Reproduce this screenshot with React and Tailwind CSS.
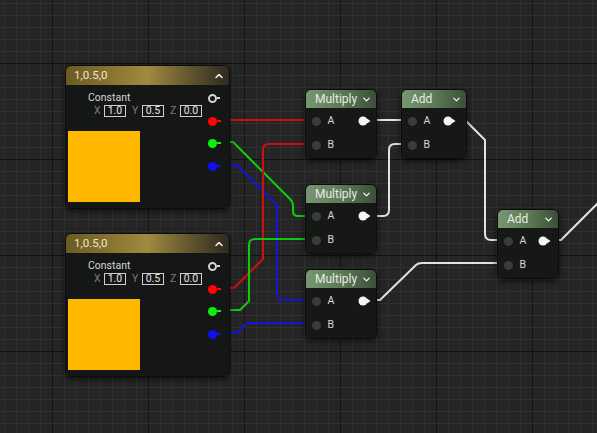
import { ChevronUp, ChevronDown } from "lucide-react";

const font = { fontFamily: "Roboto, 'Liberation Sans', sans-serif" };

function Grid() {
	const v = [];
	const h = [];
	for (let x = 4; x < 600; x += 12) v.push(x);
	for (let y = 3; y < 440; y += 12) h.push(y);
	return (
		<svg className="absolute inset-0" width="597" height="433">
			{v.map((x) => (
				<line key={"v" + x} x1={x + 0.5} y1="0" x2={x + 0.5} y2="433" stroke={(x - 52) % 96 === 0 ? "#121212" : "#303030"} strokeWidth="1" />
			))}
			{h.map((y) => (
				<line key={"h" + y} x1="0" y1={y + 0.5} x2="597" y2={y + 0.5} stroke={(y - 63) % 96 === 0 ? "#121212" : "#303030"} strokeWidth="1" />
			))}
		</svg>
	);
}

function Wires() {
	const red = "#d01010";
	const green = "#12c812";
	const blue = "#1414dc";
	const white = "#e2e2e2";
	return (
		<svg className="absolute inset-0" width="597" height="433" fill="none" strokeWidth="2" strokeLinejoin="round">
			<path d="M221 120 H316" stroke={red} />
			<path d="M221 142 H233 L290 199 Q293 202 293 206 V211 Q293 216 298 216 H316" stroke={green} />
			<path d="M221 165 H237 L277 205 V294 Q277 300 283 300 H316" stroke={blue} />
			<path d="M221 288 H234 L263 259 V150 Q263 144 269 144 H316" stroke={red} />
			<path d="M221 310 H240 L249 301 V245 Q249 239 255 239 H316" stroke={green} />
			<path d="M221 333 H237 L247 323 H316" stroke={blue} />
			<path d="M363 120 H411" stroke={white} />
			<path d="M363 216 H383 Q389 216 389 210 V150 Q389 144 395 144 H411" stroke={white} />
			<path d="M363 300 H380 L416 265 Q418 263 422 263 H507" stroke={white} />
			<path d="M448 120 H465 L485 140 V234 Q485 240 491 240 H507" stroke={white} />
			<path d="M543 240 H561 L600 201" stroke={white} />
		</svg>
	);
}

function ColorPin({ color }) {
	return (
		<div className="flex items-center h-[9px]">
			<div className={`w-[9px] h-[9px] rounded-full ${color}`}></div>
			<div className={`w-[4px] h-[2px] ${color}`}></div>
		</div>
	);
}

function ValueBox({ label, value }) {
	return (
		<div className="flex items-center">
			<span className="text-[10.5px] text-[#7c7c7c] w-[7px] leading-none">{label}</span>
			<span className="ml-[3px] w-[22px] h-[12px] border border-[#cfcfcf] text-[10.5px] leading-[10px] text-[#e6e6e6] flex items-center justify-center">{value}</span>
		</div>
	);
}

function ConstNode({ pos }) {
	return (
		<div className={`absolute left-[65px] w-[165px] rounded-[6px] border border-[#0c0c0c] shadow-[0_2px_6px_rgba(0,0,0,0.6)] overflow-hidden ${pos}`}>
			<div className="h-[19px] flex items-center justify-between pl-[8px] pr-[4px] bg-linear-to-r from-[#6b5a22] via-[#a08a3e] to-[#2f2a1e]">
				<span className="text-[11.5px] text-[#ece6d0]">1,0.5,0</span>
				<ChevronUp size={12} strokeWidth={3} color="#f2f2f2" />
			</div>
			<div className="h-[123px] bg-[#151716] flex pl-[2px]">
				<div className="flex-1 flex flex-col pt-[6px]">
					<div className="h-[14px] pl-[20px] text-[10.5px] leading-[14px] text-[#d6d6d6]">Constant</div>
					<div className="h-[12px] pl-[26px] flex items-center gap-[6px]">
						<ValueBox label="X" value="1.0" />
						<ValueBox label="Y" value="0.5" />
						<ValueBox label="Z" value="0.0" />
					</div>
					<div className="mt-[14px] w-[72px] h-[71px] bg-[#ffb800]"></div>
				</div>
				<div className="w-[25px] flex flex-col pl-[3.5px]">
					<div className="mt-[8.5px] flex items-center h-[9px]">
						<div className="w-[9px] h-[9px] rounded-full border-2 border-[#d4d4d4]"></div>
						<div className="w-[3px] h-[2px] bg-[#d4d4d4]"></div>
					</div>
					<div className="mt-[14px]"><ColorPin color="bg-[#ff0505]" /></div>
					<div className="mt-[13px]"><ColorPin color="bg-[#10f010]" /></div>
					<div className="mt-[14px]"><ColorPin color="bg-[#1010f5]" /></div>
				</div>
			</div>
		</div>
	);
}

function OutPin() {
	return (
		<svg width="14" height="10" viewBox="0 0 14 10">
			<circle cx="5" cy="5" r="4.5" fill="#f4f4f4" />
			<path d="M9 2.5 L12.5 5 L9 7.5 Z" fill="#f4f4f4" />
		</svg>
	);
}

function InRow({ label, children }) {
	return (
		<div className="h-[16px] flex items-center pl-[5.5px]">
			<div className="w-[9px] h-[9px] rounded-full bg-[#3b3b3b]"></div>
			<span className="ml-[7px] text-[10.5px] text-[#d8d8d8]">{label}</span>
			{children}
		</div>
	);
}

function MathNode({ pos, title, outPad }) {
	return (
		<div className={`absolute rounded-[6px] border border-[#0c0c0c] shadow-[0_2px_6px_rgba(0,0,0,0.6)] overflow-hidden ${pos}`}>
			<div className="h-[18px] flex items-center justify-between pl-[9px] pr-[4px] bg-linear-to-r from-[#789672] via-[#5d7b57] to-[#3c4f39]">
				<span className="text-[12px] text-[#e6ebe4]">{title}</span>
				<ChevronDown size={11} strokeWidth={3} color="#f2f2f2" />
			</div>
			<div className="h-[50px] bg-[#161816] flex flex-col pt-[5px] gap-[8px]">
				<InRow label="A">
					<div className={`ml-auto flex items-center ${outPad}`}><OutPin /></div>
				</InRow>
				<InRow label="B" />
			</div>
		</div>
	);
}

function App() {
	return (
		<div className="relative w-[597px] h-[433px] overflow-hidden bg-[#252525]" style={font}>
			<Grid />
			<Wires />
			<ConstNode pos="top-[65px]" />
			<ConstNode pos="top-[233px]" />
			<MathNode pos="left-[305px] top-[89px] w-[72px]" title="Multiply" outPad="pr-[4px]" />
			<MathNode pos="left-[305px] top-[184px] w-[72px]" title="Multiply" outPad="pr-[4px]" />
			<MathNode pos="left-[305px] top-[269px] w-[72px]" title="Multiply" outPad="pr-[4px]" />
			<MathNode pos="left-[401px] top-[89px] w-[66px]" title="Add" outPad="pr-[9px]" />
			<MathNode pos="left-[497px] top-[209px] w-[62px]" title="Add" outPad="pr-[6px]" />
		</div>
	);
}

export default App;
